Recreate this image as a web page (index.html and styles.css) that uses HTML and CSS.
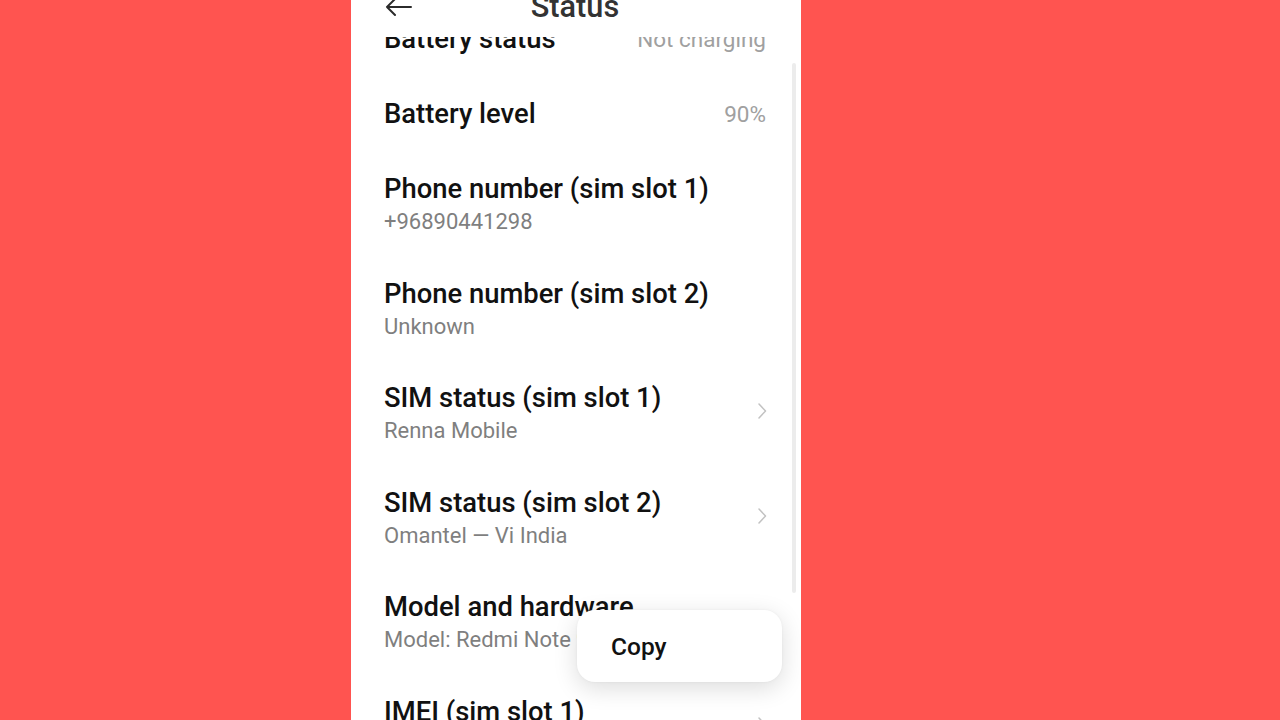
FILE: index.html
```html
<!DOCTYPE html>
<html lang="en">
<head>
<meta charset="utf-8">
<title>Status</title>
<link rel="stylesheet" href="styles.css">
</head>
<body>
<div class="stage">
  <div class="phone">
    <header class="topbar">
      <svg class="back" width="28" height="20" viewBox="0 0 28 20" aria-hidden="true">
        <path d="M26 10 H2 M10 2 L2 10 L10 18" fill="none" stroke="#2b2b2b" stroke-width="2" stroke-linecap="round" stroke-linejoin="round"/>
      </svg>
      <div class="title">Status</div>
    </header>
    <div class="list">
      <div class="row single">
        <div class="main"><div class="t">Battery status</div></div>
        <div class="val">Not charging</div>
      </div>
      <div class="row single">
        <div class="main"><div class="t">Battery level</div></div>
        <div class="val">90%</div>
      </div>
      <div class="row">
        <div class="main"><div class="t">Phone number (sim slot 1)</div><div class="s">+96890441298</div></div>
      </div>
      <div class="row">
        <div class="main"><div class="t">Phone number (sim slot 2)</div><div class="s">Unknown</div></div>
      </div>
      <div class="row">
        <div class="main"><div class="t">SIM status (sim slot 1)</div><div class="s">Renna Mobile</div></div>
        <svg class="chev" width="10" height="18" viewBox="0 0 10 18" aria-hidden="true"><path d="M2 2 L8.5 9 L2 16" fill="none" stroke="#c2c2c2" stroke-width="1.5" stroke-linecap="round" stroke-linejoin="round"/></svg>
      </div>
      <div class="row">
        <div class="main"><div class="t">SIM status (sim slot 2)</div><div class="s">Omantel — Vi India</div></div>
        <svg class="chev" width="10" height="18" viewBox="0 0 10 18" aria-hidden="true"><path d="M2 2 L8.5 9 L2 16" fill="none" stroke="#c2c2c2" stroke-width="1.5" stroke-linecap="round" stroke-linejoin="round"/></svg>
      </div>
      <div class="row">
        <div class="main"><div class="t">Model and hardware</div><div class="s">Model: Redmi Note 9 Pro</div></div>
      </div>
      <div class="row">
        <div class="main"><div class="t">IMEI (sim slot 1)</div><div class="s">864523049871235</div></div>
        <svg class="chev" width="10" height="18" viewBox="0 0 10 18" aria-hidden="true"><path d="M2 2 L8.5 9 L2 16" fill="none" stroke="#c2c2c2" stroke-width="1.5" stroke-linecap="round" stroke-linejoin="round"/></svg>
      </div>
    </div>
    <div class="scrollbar"></div>
    <div class="popup">Copy</div>
  </div>
</div>
</body>
</html>
```

FILE: styles.css
```css
html, body {
  margin: 0;
  padding: 0;
  height: 100%;
}
body {
  background: #ff5450;
  font-family: Roboto, "Noto Sans", "Liberation Sans", sans-serif;
  overflow: hidden;
}
.stage {
  display: flex;
  justify-content: flex-start;
  padding-left: 351px;
  height: 720px;
}
.phone {
  position: relative;
  width: 450px;
  height: 720px;
  background: #ffffff;
  overflow: hidden;
}
.topbar {
  position: absolute;
  top: 0;
  left: 0;
  right: 0;
  height: 37px;
  background: #ffffff;
  z-index: 2;
}
.back {
  position: absolute;
  left: 34px;
  top: -3px;
}
.title {
  position: absolute;
  left: 0;
  right: 0;
  top: -11px;
  text-align: center;
  font-size: 30.7px;
  line-height: 36px;
  font-weight: 500;
  color: #333333;
  padding-right: 2px;
}
.list {
  padding-top: 1px;
}
.row {
  display: flex;
  align-items: center;
  padding: 21px 35px 17.5px 33px;
}
.row.single {
  padding-top: 21.75px;
  padding-bottom: 21.75px;
}
.main {
  flex: 1;
  min-width: 0;
}
.t {
  font-size: 27.4px;
  line-height: 32px;
  font-weight: 500;
  color: #111111;
  white-space: nowrap;
}
.s {
  font-size: 22px;
  line-height: 34px;
  color: #7f7f7f;
  white-space: nowrap;
}
.val {
  font-size: 22.5px;
  color: #a0a0a0;
  white-space: nowrap;
}
.chev {
  flex: none;
  margin-bottom: 8px;
  margin-right: -1px;
}
.scrollbar {
  position: absolute;
  left: 441px;
  top: 63px;
  width: 4px;
  height: 530px;
  border-radius: 2px;
  background: #ececec;
}
.popup {
  position: absolute;
  left: 226px;
  top: 610px;
  width: 205px;
  height: 72px;
  box-sizing: border-box;
  padding-left: 34px;
  display: flex;
  align-items: center;
  background: #ffffff;
  border-radius: 18px;
  box-shadow: 0 6px 24px rgba(0, 0, 0, 0.14), 0 0 3px rgba(0, 0, 0, 0.05);
  font-size: 24.5px;
  font-weight: 500;
  color: #111111;
  z-index: 3;
}
```
